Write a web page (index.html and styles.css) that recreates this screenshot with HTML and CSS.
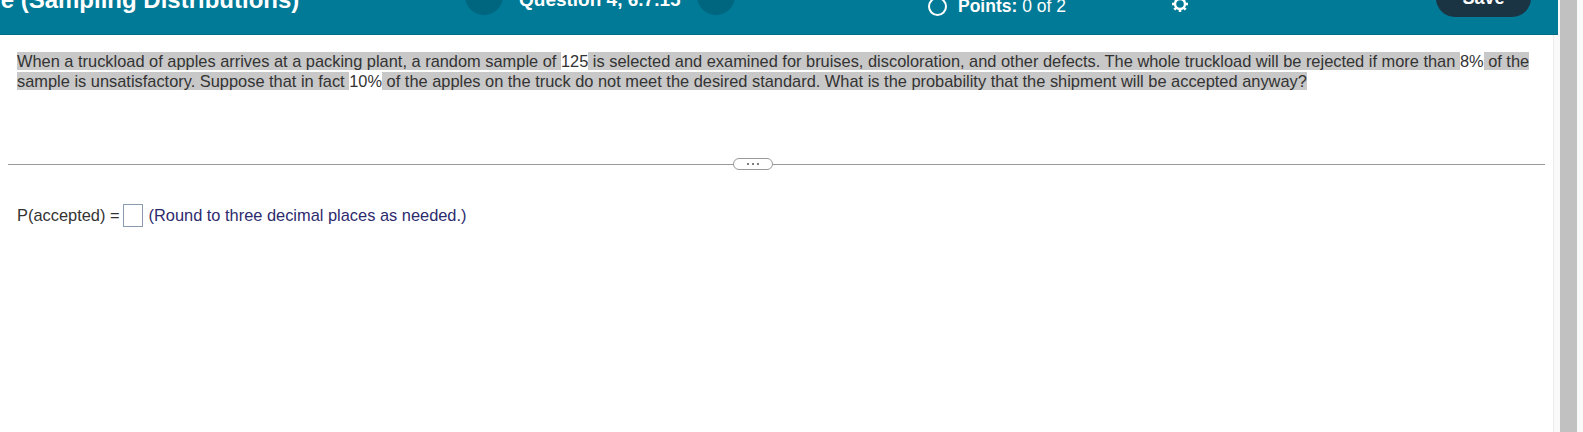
FILE: index.html
```html
<!DOCTYPE html>
<html>
<head>
<meta charset="utf-8">
<link rel="stylesheet" href="styles.css">
</head>
<body>
<div class="page">
  <div class="main">
    <header class="topbar">
      <div class="bar-row">
        <div class="title">ne (Sampling Distributions)</div>
        <div class="nav">
          <span class="nav-btn"></span>
          <span class="nav-text">Question 4, 6.7.15</span>
          <span class="nav-btn"></span>
        </div>
        <div class="points">
          <span class="ring"></span>
          <span><b>Points:</b> 0 of 2</span>
        </div>
        <div class="gear">
          <svg width="18" height="18" viewBox="0 0 18 18"><circle cx="9" cy="9" r="5" fill="none" stroke="#fff" stroke-width="2.4"/><circle cx="9" cy="9" r="2" fill="#007a96"/><g stroke="#fff" stroke-width="2.6"><line x1="9" y1="1" x2="9" y2="4"/><line x1="9" y1="14" x2="9" y2="17"/><line x1="1" y1="9" x2="4" y2="9"/><line x1="14" y1="9" x2="17" y2="9"/><line x1="3.3" y1="3.3" x2="5.4" y2="5.4"/><line x1="12.6" y1="12.6" x2="14.7" y2="14.7"/><line x1="3.3" y1="14.7" x2="5.4" y2="12.6"/><line x1="12.6" y1="5.4" x2="14.7" y2="3.3"/></g></svg>
        </div>
        <div class="save">Save</div>
      </div>
    </header>
    <section class="question">
      <p class="qtext"><span class="sel">When a truckload of apples arrives at a packing plant, a random sample of </span>125<span class="sel"> is selected and examined for bruises, discoloration, and other defects. The whole truckload will be rejected if more than </span>8%<span class="sel"> of the sample is unsatisfactory. Suppose that in fact </span>10%<span class="sel"> of the apples on the truck do not meet the desired standard. What is the probability that the shipment will be accepted anyway?</span></p>
    </section>
    <div class="divider">
      <span class="more"><i></i><i></i><i></i></span>
    </div>
    <div class="answer">
      <span>P(accepted) =</span>
      <span class="box"></span>
      <span class="hint">(Round to three decimal places as needed.)</span>
    </div>
  </div>
  <div class="scroll"><div class="thumb"></div></div>
</div>
</body>
</html>
```
FILE: styles.css
```css
html, body { margin: 0; padding: 0; background: #fff; }
body { font-family: "Liberation Sans", Arial, sans-serif; color: #333; }
.page { display: flex; height: 432px; overflow: hidden; }
.main { flex: 1; min-width: 0; }
.scroll { width: 23px; border-left: 1px solid #ececec; background: #fafafa; display: flex; padding-left: 6px; }
.thumb { width: 17px; background: #c1c1c1; }
.topbar { height: 34px; background: #007a96; overflow: hidden; border-bottom: 1px solid #006d86; margin-right: -5px; position: relative; z-index: 1; }
.bar-row { display: flex; align-items: center; height: 44px; margin-top: -22px; }
.title { color: #fff; font-weight: bold; font-size: 24px; margin-left: -14px; width: 490px; white-space: nowrap; }
.nav { display: flex; align-items: center; gap: 16px; width: 463px; margin-left: -11px; }
.nav-btn { width: 38px; height: 38px; border-radius: 50%; background: #00667f; margin-top: -8px; }
.nav-text { color: #fff; font-weight: bold; font-size: 19px; }
.points { display: flex; align-items: center; gap: 11px; color: #fff; font-size: 17.5px; margin-top: 12px; width: 243px; }
.points b { font-weight: bold; }
.ring { width: 15px; height: 15px; border: 2px solid #fff; border-radius: 50%; }
.gear { width: 265px; display: flex; margin-top: 8px; }
.save { background: #1b3444; color: #fff; font-weight: bold; font-size: 18px; width: 95px; height: 38px; border-radius: 19px; display: flex; align-items: center; justify-content: center; margin-top: -4px; }
.question { padding: 17px 8px 0 17px; }
.qtext { margin: 0; font-size: 16.4px; line-height: 19.5px; color: #333; }
.sel { background: #c8c8c8; }
.divider { margin: 73px 8px 0 8px; height: 1px; background: #999; position: relative; }
.more { position: absolute; top: -6px; left: 725px; width: 40px; height: 12px; border: 1px solid #999; border-radius: 6px; background: #fff; display: flex; align-items: center; justify-content: center; gap: 3px; box-sizing: border-box; }
.more i { width: 2px; height: 2px; background: #555; border-radius: 50%; }
.answer { display: flex; align-items: center; padding: 39px 0 0 17px; font-size: 16.4px; color: #333; }
.box { width: 18px; height: 21px; border: 1px solid #8a9bb0; margin: 0 6px 0 3px; }
.hint { color: #2d2a6e; }
```
